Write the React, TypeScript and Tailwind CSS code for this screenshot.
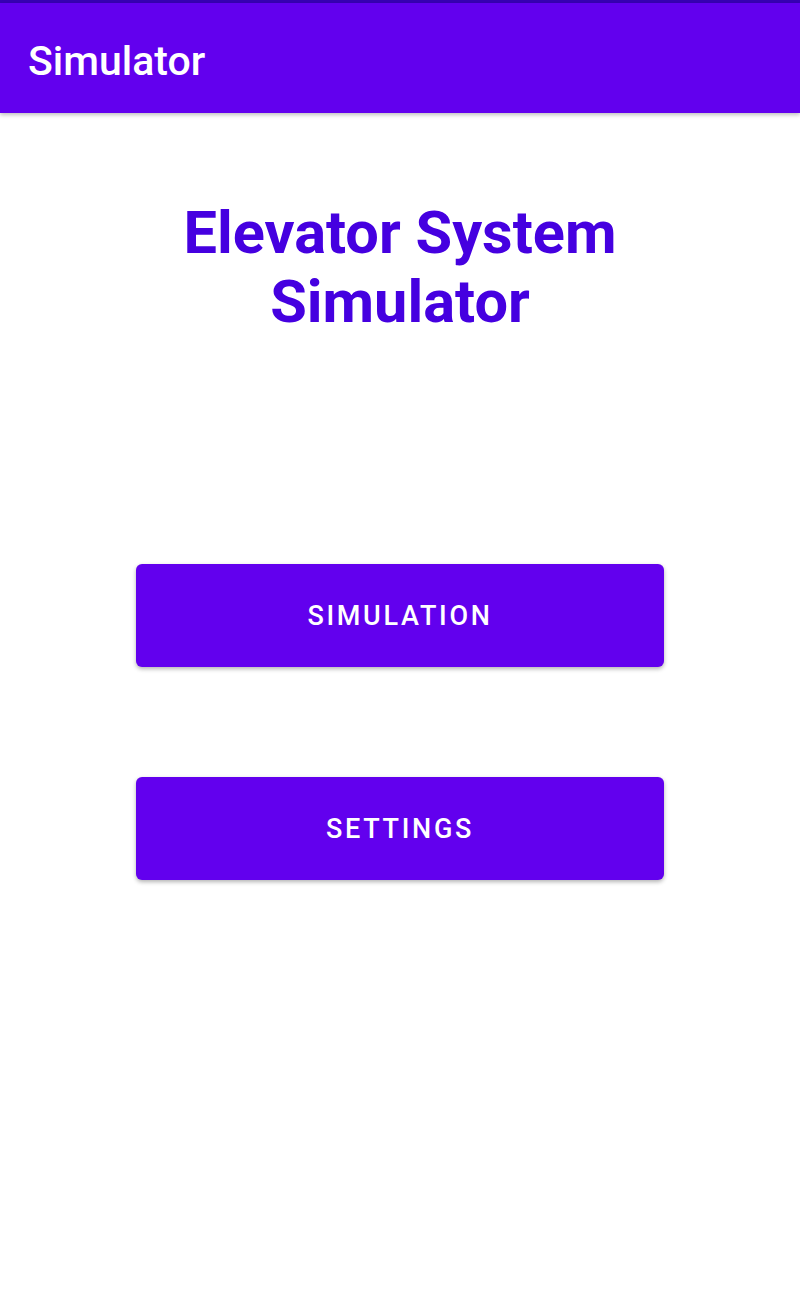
export default function App() {
  return (
    <div className="min-h-[1296px] bg-white font-['Roboto',sans-serif]">
      {/* status bar strip + app bar */}
      <div className="h-[3px] bg-[#3700B3]" />
      <header className="relative z-10 flex h-[110px] items-center bg-[#6200EE] px-[28px] pt-[6px] shadow-[0_2px_4px_rgba(0,0,0,0.25)]">
        <h1 className="text-[41px] font-medium leading-none text-white">Simulator</h1>
      </header>

      <main className="flex flex-col items-center">
        <h2 className="mt-[86px] text-center text-[59.5px] font-bold leading-[69px] text-[#4500E0]">
          Elevator System
          <br />
          Simulator
        </h2>

        <div className="mt-[227px] flex w-[528px] flex-col gap-[110px]">
          <button className="h-[103px] w-full rounded-[6px] bg-[#6200EE] pt-[2px] text-[27px] font-medium uppercase tracking-[0.1em] text-white shadow-[0_2px_4px_rgba(0,0,0,0.3)]">
            Simulation
          </button>
          <button className="h-[103px] w-full rounded-[6px] bg-[#6200EE] pt-[2px] text-[27px] font-medium uppercase tracking-[0.1em] text-white shadow-[0_2px_4px_rgba(0,0,0,0.3)]">
            Settings
          </button>
        </div>
      </main>
    </div>
  );
}
